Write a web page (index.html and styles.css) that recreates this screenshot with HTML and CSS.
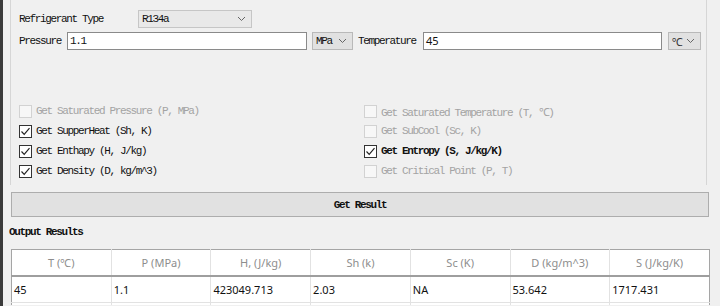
FILE: index.html
```html
<!DOCTYPE html>
<html lang="en">
<head>
    <meta charset="UTF-8">
    <title>Refrigerant Properties</title>
    <link rel="stylesheet" href="styles.css">
</head>
<body>
    <div class="window">
        <div class="window-edge"></div>
        <div class="window-body">
            <div class="settings">
                <div class="form-row form-row--type">
                    <span class="label label--type">Refrigerant Type</span>
                    <div class="combo combo--type">
                        <span>R134a</span>
                        <svg class="chevron" width="9" height="6" viewBox="0 0 9 6"><path d="M1 1 L4.5 4.5 L8 1" fill="none" stroke="#666" stroke-width="1"/></svg>
                    </div>
                </div>
                <div class="form-row">
                    <span class="label label--pressure">Pressure</span>
                    <div class="text-input text-input--pressure">1.1</div>
                    <div class="combo combo--unit combo--mpa">
                        <span>MPa</span>
                        <svg class="chevron" width="9" height="6" viewBox="0 0 9 6"><path d="M1 1 L4.5 4.5 L8 1" fill="none" stroke="#666" stroke-width="1"/></svg>
                    </div>
                    <span class="label label--temp">Temperature</span>
                    <div class="text-input text-input--temp">45</div>
                    <div class="combo combo--unit combo--deg">
                        <span>℃</span>
                        <svg class="chevron" width="9" height="6" viewBox="0 0 9 6"><path d="M1 1 L4.5 4.5 L8 1" fill="none" stroke="#666" stroke-width="1"/></svg>
                    </div>
                </div>

                <div class="options">
                    <label class="option option--disabled"><span class="check"></span>Get Saturated Pressure (P, MPa)</label>
                    <label class="option option--disabled"><span class="check"></span>Get Saturated Temperature (T, ℃)</label>

                    <label class="option"><span class="check check--on"><svg width="11" height="11" viewBox="0 0 11 11"><path d="M1.5 5.5 L4.2 8.3 L9.5 2.2" fill="none" stroke="#222" stroke-width="1.2"/></svg></span>Get SupperHeat (Sh, K)</label>
                    <label class="option option--disabled"><span class="check"></span>Get SubCool (Sc, K)</label>

                    <label class="option"><span class="check check--on"><svg width="11" height="11" viewBox="0 0 11 11"><path d="M1.5 5.5 L4.2 8.3 L9.5 2.2" fill="none" stroke="#222" stroke-width="1.2"/></svg></span>Get Enthapy (H, J/kg)</label>
                    <label class="option option--bold"><span class="check check--on"><svg width="11" height="11" viewBox="0 0 11 11"><path d="M1.5 5.5 L4.2 8.3 L9.5 2.2" fill="none" stroke="#222" stroke-width="1.2"/></svg></span>Get Entropy (S, J/kg/K)</label>

                    <label class="option"><span class="check check--on"><svg width="11" height="11" viewBox="0 0 11 11"><path d="M1.5 5.5 L4.2 8.3 L9.5 2.2" fill="none" stroke="#222" stroke-width="1.2"/></svg></span>Get Density (D, kg/m^3)</label>
                    <label class="option option--disabled"><span class="check"></span>Get Critical Point (P, T)</label>
                </div>
            </div>

            <button class="result-button">Get Result</button>

            <div class="section-title">Output Results</div>

            <table class="results">
                <thead>
                    <tr>
                        <th>T (℃)</th>
                        <th>P (MPa)</th>
                        <th>H, (J/kg)</th>
                        <th>Sh (k)</th>
                        <th>Sc (K)</th>
                        <th>D (kg/m^3)</th>
                        <th>S (J/kg/K)</th>
                    </tr>
                </thead>
                <tbody>
                    <tr>
                        <td>45</td>
                        <td>1.1</td>
                        <td>423049.713</td>
                        <td>2.03</td>
                        <td>NA</td>
                        <td>53.642</td>
                        <td>1717.431</td>
                    </tr>
                    <tr class="results-filler">
                        <td></td><td></td><td></td><td></td><td></td><td></td><td></td>
                    </tr>
                </tbody>
            </table>
        </div>
    </div>
</body>
</html>
```

FILE: styles.css
```css
:root {
    --bg: #f0f0f0;
    --edge: #3b3b3b;
    --panel-line: #d6d6d6;
    --mono: "Liberation Mono", "DejaVu Sans Mono", monospace;
    --sans: "Noto Sans", "Liberation Sans", sans-serif;
    --disabled: #a3a3a3;
}

html, body {
    margin: 0;
    width: 720px;
    height: 306px;
    overflow: hidden;
    background: var(--bg);
}

body {
    font-family: var(--mono);
    font-size: 11px;
    letter-spacing: -1.35px;
    color: #111;
}

.window {
    display: flex;
    height: 306px;
}

.window-edge {
    width: 3px;
    flex-shrink: 0;
    background: var(--edge);
}

.window-body {
    flex: 1;
    display: flex;
    flex-direction: column;
    align-items: flex-start;
}

.window-body > * {
    flex-shrink: 0;
}

.settings {
    margin-left: 7px;
    width: 697px;
    height: 185px;
    border-left: 1px solid var(--panel-line);
    border-right: 1px solid var(--panel-line);
    box-sizing: border-box;
    padding: 10px 0 0 8px;
}

.form-row {
    display: flex;
    align-items: center;
    height: 18px;
}

.form-row--type {
    margin-bottom: 4px;
}

.label {
    flex-shrink: 0;
    white-space: nowrap;
}

.label--type {
    width: 119px;
}

.label--pressure {
    width: 48px;
}

.label--temp {
    width: 65px;
    margin-left: 5px;
}

.text-input {
    height: 18px;
    box-sizing: border-box;
    background: #fff;
    border: 1px solid #8a8a8a;
    padding: 0 2px;
    line-height: 16px;
    flex-shrink: 0;
}

.text-input--pressure {
    width: 240px;
}

.text-input--temp {
    width: 239px;
    font-family: var(--sans);
    letter-spacing: 0;
    font-size: 11px;
}

.combo {
    height: 18px;
    box-sizing: border-box;
    display: flex;
    align-items: center;
    justify-content: space-between;
    padding: 0 5px 0 3px;
    flex-shrink: 0;
}

.combo--type {
    width: 114px;
    background: #e9e9e9;
    border: 1px solid #c6c6c6;
}

.combo--unit {
    background: #e1e1e1;
    border: 1px solid #b9b9b9;
    margin-left: 5px;
}

.combo--mpa {
    width: 41px;
}

.combo--deg {
    width: 33px;
    margin-left: 6px;
}

.combo--deg span {
    font-family: var(--sans);
    letter-spacing: 0;
    color: #333;
}

.chevron {
    flex-shrink: 0;
}

.options {
    display: grid;
    grid-template-columns: 345px 1fr;
    grid-auto-rows: 20px;
    margin-top: 51px;
}

.option {
    display: flex;
    align-items: center;
    gap: 4px;
    white-space: nowrap;
}

.option--disabled {
    color: var(--disabled);
}

.option--bold {
    font-weight: bold;
}

.check {
    width: 13px;
    height: 13px;
    box-sizing: border-box;
    border: 1px solid #d2d2d2;
    background: #f7f7f7;
    display: flex;
    align-items: center;
    justify-content: center;
    flex-shrink: 0;
}

.check--on {
    border-color: #333;
    background: #fff;
}

.result-button {
    margin: 7px 0 0 8px;
    width: 698px;
    height: 25px;
    background: #e1e1e1;
    border: 1px solid #adadad;
    font-family: var(--mono);
    font-size: 11px;
    letter-spacing: -1.35px;
    font-weight: bold;
    color: #111;
    padding: 0;
}

.section-title {
    margin: 8px 0 0 6px;
    height: 14px;
    line-height: 14px;
    font-weight: bold;
}

.results {
    margin: 10px 0 0 8px;
    width: 699px;
    border-collapse: collapse;
    table-layout: fixed;
    background: #fff;
    border: 1px solid #a5a5a5;
    border-bottom: none;
    font-family: var(--sans);
    font-size: 11px;
    letter-spacing: 0;
}

.results th {
    height: 25px;
    font-weight: normal;
    color: #8d8d8d;
    border-right: 1px solid #e2e2e2;
    border-bottom: 2px solid #9e9e9e;
    padding: 0;
}

.results td {
    height: 25px;
    padding: 0 0 0 2px;
    color: #111;
    border-right: 1px solid #e2e2e2;
    border-bottom: 1px solid #e2e2e2;
}

.results .results-filler td {
    height: 2px;
    border-bottom: none;
}

.results th:last-child,
.results td:last-child {
    border-right: none;
}
```
